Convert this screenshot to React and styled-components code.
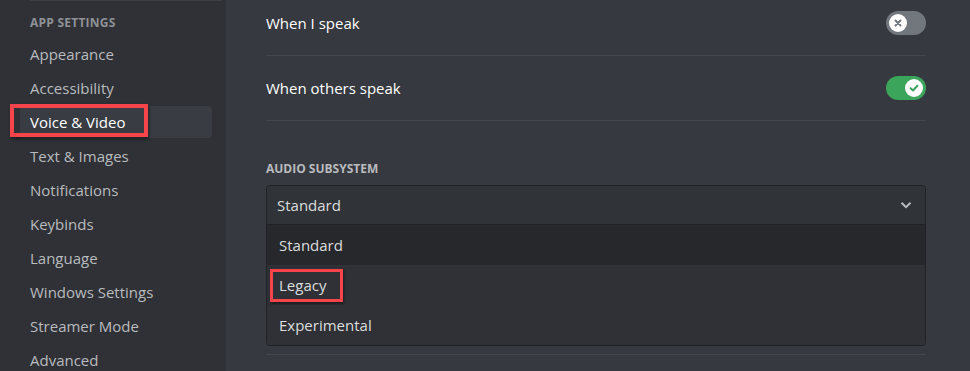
import React from "react";
import styled, { createGlobalStyle } from "styled-components";

const GlobalStyle = createGlobalStyle`
  html, body {
    margin: 0;
    padding: 0;
    background: #36393f;
    overflow: hidden;
  }
  * { box-sizing: border-box; }
`;

const Page = styled.div`
  display: flex;
  width: 970px;
  height: 371px;
  overflow: hidden;
  font-family: "Open Sans", "Noto Sans", sans-serif;
  background: #36393f;
`;

const Sidebar = styled.nav`
  width: 226px;
  flex-shrink: 0;
  background: #2f3136;
  padding: 0 14px 0 20px;
  display: flex;
  flex-direction: column;
  & > * { flex-shrink: 0; }
`;

const SideDivider = styled.div`
  height: 1px;
  margin: 0 -10px 14px 10px;
  background: #3b3e44;
`;

const SideHeading = styled.div`
  padding: 0 10px;
  height: 16px;
  line-height: 16px;
  font-size: 12px;
  font-weight: 700;
  color: #8e9297;
  text-transform: uppercase;
  letter-spacing: 0.02em;
  margin-bottom: 7px;
`;

const SideItem = styled.div`
  position: relative;
  height: 32px;
  margin-bottom: 2px;
  padding: 0 10px;
  display: flex;
  align-items: center;
  border-radius: 4px;
  font-size: 15px;
  font-weight: 500;
  color: ${(p) => (p.$active ? "#ffffff" : "#b9bbbe")};
  background: ${(p) => (p.$active ? "#393c43" : "transparent")};
`;

const Highlight = styled.span`
  position: absolute;
  left: ${(p) => p.$left}px;
  top: ${(p) => p.$top}px;
  width: ${(p) => p.$w}px;
  height: ${(p) => p.$h}px;
  border: ${(p) => p.$b}px solid #f5444a;
  box-shadow: 1px 2px 3px rgba(0, 0, 0, 0.45);
  pointer-events: none;
`;

const Main = styled.main`
  flex: 1;
  padding: 0 44px 0 40px;
  display: flex;
  flex-direction: column;
  margin-top: -9px;
  & > * { flex-shrink: 0; }
`;

const Row = styled.div`
  height: 65px;
  display: flex;
  align-items: center;
  justify-content: space-between;
  border-bottom: 1px solid #42454b;
`;

const RowLabel = styled.div`
  font-size: 15px;
  font-weight: 500;
  color: #ffffff;
  margin-top: -1px;
`;

const Track = styled.div`
  width: 40px;
  height: 24px;
  border-radius: 12px;
  background: ${(p) => (p.$on ? "#3ba55c" : "#72767d")};
  display: flex;
  align-items: center;
  justify-content: ${(p) => (p.$on ? "flex-end" : "flex-start")};
  padding: 0 3px;
`;

const Knob = styled.div`
  width: 18px;
  height: 18px;
  border-radius: 50%;
  background: #ffffff;
  display: flex;
  align-items: center;
  justify-content: center;
`;

const Section = styled.div`
  margin-top: 40px;
`;

const SectionTitle = styled.div`
  height: 16px;
  line-height: 16px;
  font-size: 12px;
  font-weight: 700;
  color: #b9bbbe;
  text-transform: uppercase;
  margin-bottom: 8px;
`;

const SelectBox = styled.div`
  border: 1px solid #202225;
  border-radius: 4px;
  overflow: hidden;
`;

const SelectControl = styled.div`
  height: 39px;
  padding: 0 12px 0 10px;
  display: flex;
  align-items: center;
  justify-content: space-between;
  background: #303338;
  border-bottom: 1px solid #202225;
  font-size: 15px;
  color: #dcddde;
`;

const Option = styled.div`
  position: relative;
  height: 40px;
  padding: 0 12px;
  display: flex;
  align-items: center;
  font-size: 15px;
  color: #dcddde;
  background: ${(p) => (p.$selected ? "#26282c" : "#2f3136")};
`;

const BottomDivider = styled.div`
  height: 1px;
  margin-top: 8px;
  background: #42454b;
`;

const Toggle = ({ on }) => (
  <Track $on={on}>
    <Knob>
      {on ? (
        <svg width="12" height="12" viewBox="0 0 12 12">
          <path d="M2.6 6.2L5 8.5 9.4 3.8" fill="none" stroke="#3ba55c" strokeWidth="2" strokeLinecap="round" strokeLinejoin="round" />
        </svg>
      ) : (
        <svg width="10" height="10" viewBox="0 0 10 10">
          <path d="M2.5 2.5L7.5 7.5M7.5 2.5L2.5 7.5" stroke="#72767d" strokeWidth="2" strokeLinecap="round" />
        </svg>
      )}
    </Knob>
  </Track>
);

const sideItems = [
  "Appearance",
  "Accessibility",
  "Voice & Video",
  "Text & Images",
  "Notifications",
  "Keybinds",
  "Language",
  "Windows Settings",
  "Streamer Mode",
  "Advanced",
];

export default function App() {
  return (
    <Page>
      <GlobalStyle />
      <Sidebar>
        <SideDivider />
        <SideHeading>App Settings</SideHeading>
        {sideItems.map((item) => (
          <SideItem key={item} $active={item === "Voice & Video"}>
            {item}
            {item === "Voice & Video" && <Highlight $left={-10} $top={-2} $w={138} $h={33} $b={4} />}
          </SideItem>
        ))}
      </Sidebar>
      <Main>
        <Row>
          <RowLabel>When I speak</RowLabel>
          <Toggle on={false} />
        </Row>
        <Row>
          <RowLabel>When others speak</RowLabel>
          <Toggle on={true} />
        </Row>
        <Section>
          <SectionTitle>Audio Subsystem</SectionTitle>
          <SelectBox>
            <SelectControl>
              Standard
              <svg width="14" height="14" viewBox="0 0 14 14">
                <path d="M2.5 4.8L7 9.2 11.5 4.8" fill="none" stroke="#b9bbbe" strokeWidth="2" />
              </svg>
            </SelectControl>
            <Option $selected>Standard</Option>
            <Option>
              Legacy
              <Highlight $left={3} $top={4} $w={73} $h={33} $b={3} />
            </Option>
            <Option>Experimental</Option>
          </SelectBox>
          <BottomDivider />
        </Section>
      </Main>
    </Page>
  );
}
